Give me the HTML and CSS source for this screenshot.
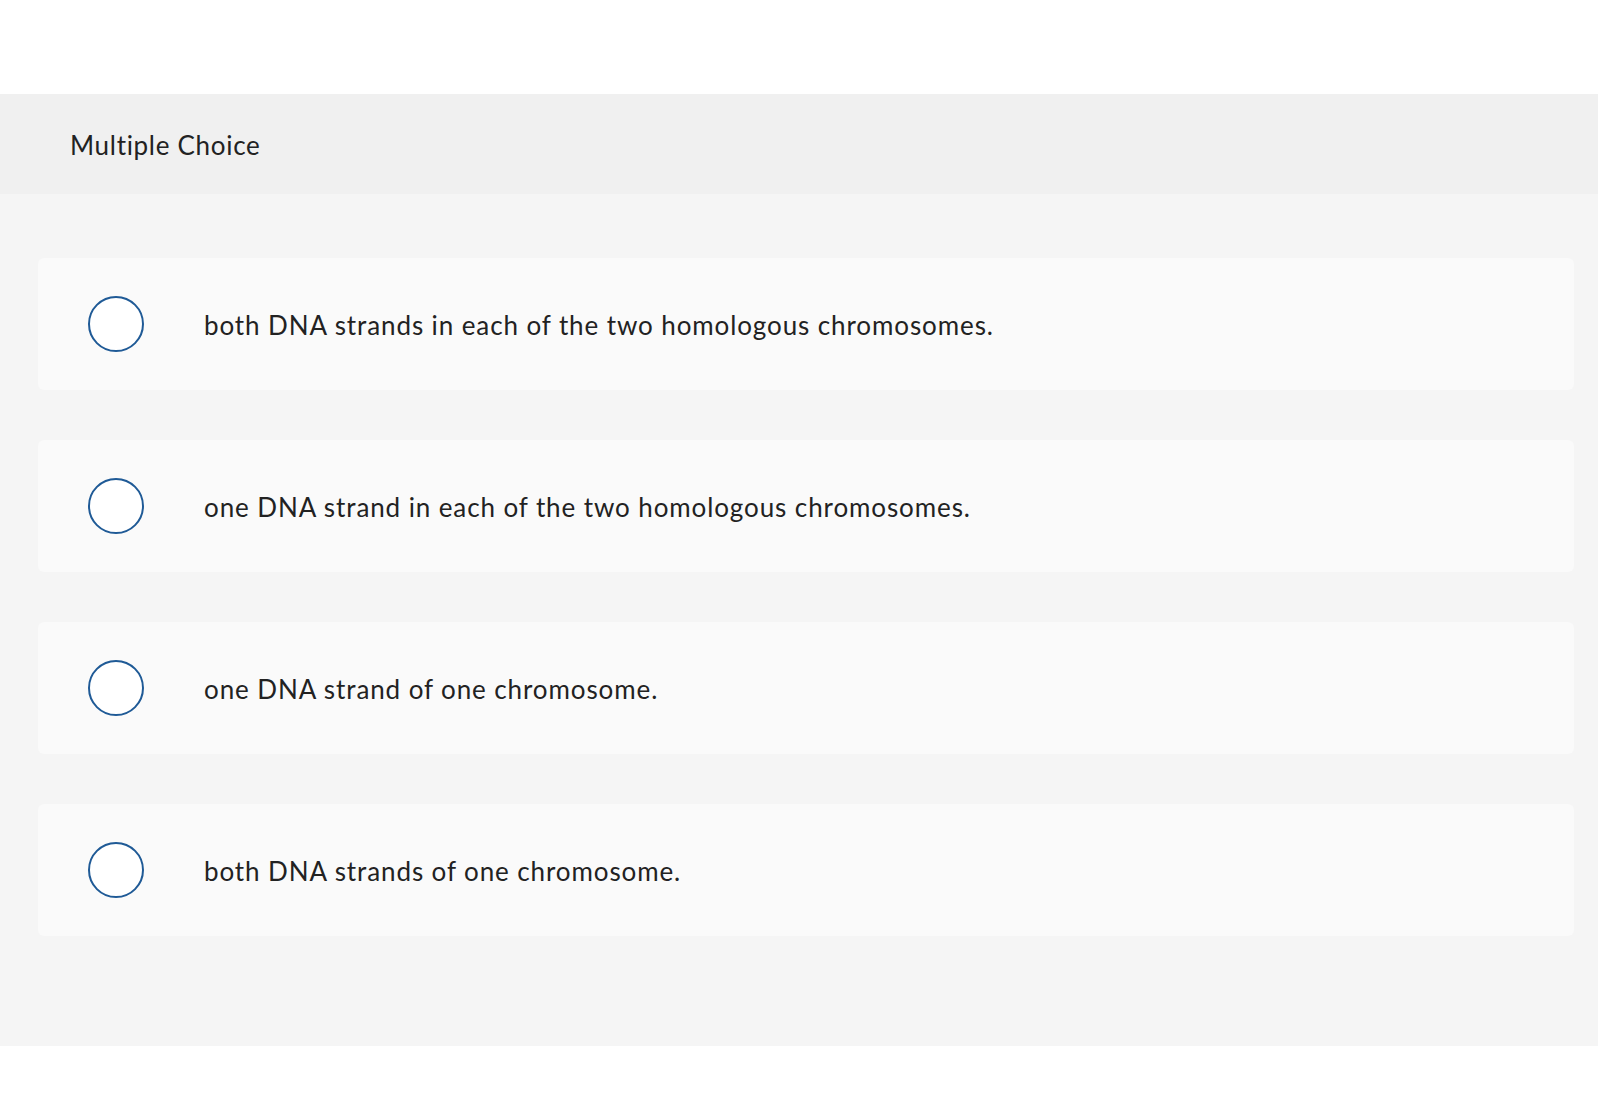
FILE: index.html
```html
<!DOCTYPE html>
<html>
<head>
<meta charset="utf-8">
<link rel="stylesheet" href="styles.css">
</head>
<body>
<div class="top-space"></div>
<div class="header"><span class="title">Multiple Choice</span></div>
<div class="choices">
  <div class="choice"><span class="radio"></span><span class="label">both DNA strands in each of the two homologous chromosomes.</span></div>
  <div class="choice"><span class="radio"></span><span class="label">one DNA strand in each of the two homologous chromosomes.</span></div>
  <div class="choice"><span class="radio"></span><span class="label">one DNA strand of one chromosome.</span></div>
  <div class="choice"><span class="radio"></span><span class="label">both DNA strands of one chromosome.</span></div>
</div>
</body>
</html>
```
FILE: styles.css
```css
html, body {
  margin: 0;
  padding: 0;
  background: #ffffff;
  font-family: Lato, "Open Sans", sans-serif;
  color: #222222;
}
.top-space {
  height: 94px;
}
.header {
  height: 100px;
  background: #f0f0f0;
  display: flex;
  align-items: center;
  padding-left: 70px;
}
.title {
  font-size: 26px;
  line-height: 1;
  letter-spacing: 0.7px;
  padding-top: 2px;
}
.choices {
  background: #f5f5f5;
  padding: 64px 24px 110px 38px;
  display: flex;
  flex-direction: column;
  gap: 50px;
}
.choice {
  height: 132px;
  background: #fafafa;
  border-radius: 6px;
  display: flex;
  align-items: center;
  padding-left: 50px;
}
.radio {
  width: 52px;
  height: 52px;
  border: 2px solid #1f5a96;
  border-radius: 50%;
  background: #ffffff;
  flex: none;
}
.label {
  margin-left: 60px;
  font-size: 26px;
  letter-spacing: 0.9px;
  padding-top: 2px;
}
```
